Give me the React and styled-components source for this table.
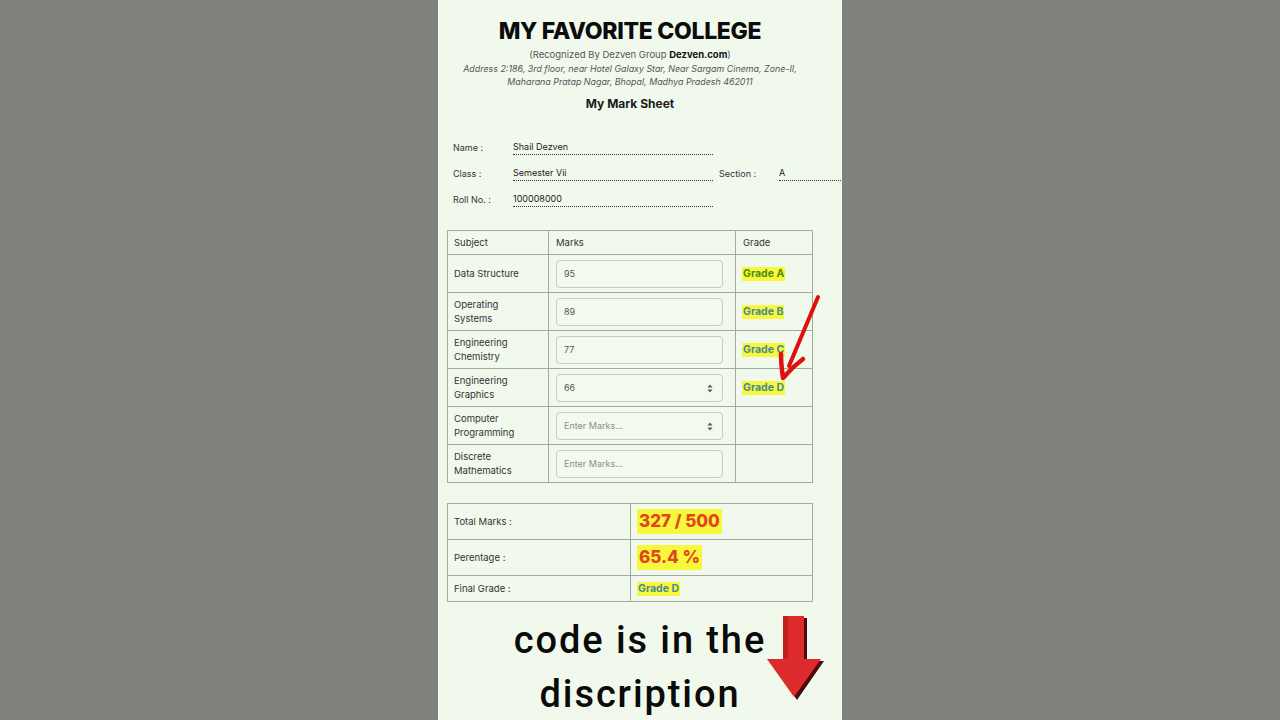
import React from "react"
import styled, { createGlobalStyle } from "styled-components"

// GLOBAL
const GlobalStyle = createGlobalStyle`
  html, body {
    margin: 0;
    padding: 0;
    background: #7f817d;
  }
  body {
    font-family: "Inter", "Noto Sans", sans-serif;
  }
`

// STYLED COMPONENTS
const Backdrop = styled.div`
  width: 1280px;
  height: 720px;
  display: flex;
  justify-content: center;
  background: linear-gradient(90deg, #7e807c 0%, #80827e 50%, #7f817d 100%);
  overflow: hidden;
`

const Sheet = styled.div`
  position: relative;
  width: 404px;
  height: 720px;
  background: #f1f9ec;
  overflow: hidden;
  display: flex;
  flex-direction: column;
`

const Header = styled.div`
  padding: 18px 20px 0 0;
  text-align: center;
  color: #111;
`

const Title = styled.div`
  font-size: 23px;
  line-height: 26px;
  font-weight: 800;
  letter-spacing: -0.3px;
  color: #0c0c0c;
`

const Recognized = styled.div`
  margin-top: 4px;
  font-size: 9.5px;
  line-height: 14px;
  color: #555;
  & > b {
    color: #111;
    font-weight: 700;
  }
`

const Address = styled.div`
  font-size: 8.9px;
  line-height: 13px;
  font-style: italic;
  color: #555;
`

const SheetTitle = styled.div`
  margin-top: 8px;
  font-size: 12px;
  line-height: 16px;
  font-weight: 700;
  color: #1a1a1a;
`

const Info = styled.div`
  margin-top: 28px;
  padding-left: 15px;
  display: flex;
  flex-direction: column;
  gap: 11px;
`

const InfoRow = styled.div`
  display: flex;
  align-items: flex-end;
  gap: 6px;
  font-size: 9px;
  line-height: 14px;
  color: #333;
`

const Label = styled.div`
  width: 54px;
  flex-shrink: 0;
`

const Value = styled.div`
  width: 200px;
  flex-shrink: 0;
  height: 14px;
  border-bottom: 1px dotted #333;
  color: #222;
`

const Table = styled.div`
  margin: ${({ top }) => top || "0"} 0 0 9px;
  width: 365px;
  display: grid;
  grid-template-columns: ${({ cols }) => cols};
  border-top: 1px solid #a3ab9f;
  border-left: 1px solid #a3ab9f;
`

const Cell = styled.div`
  height: ${({ h }) => h}px;
  box-sizing: border-box;
  border-right: 1px solid #a3ab9f;
  border-bottom: 1px solid #a3ab9f;
  padding: 0 ${({ pad }) => pad || "6px"};
  display: flex;
  align-items: center;
  font-size: 9.5px;
  line-height: 14px;
  color: #333;
`

const MarkInput = styled.div`
  position: relative;
  width: 167px;
  height: 28px;
  box-sizing: border-box;
  border: 1px solid #c4cbc1;
  border-radius: 4px;
  background: #f2f9ee;
  padding: 0 7px;
  display: flex;
  align-items: center;
  font-size: 9px;
  color: ${({ empty }) => (empty ? "#8a8f88" : "#555")};
`

const Spinner = styled.svg`
  position: absolute;
  right: 9px;
  top: 9px;
`

const Grade = styled.span`
  background: #f7f73b;
  color: ${({ color }) => color || "#4a8a96"};
  font-weight: 700;
  font-size: 10.5px;
  line-height: 14px;
  padding: 0 1px;
`

const Big = styled.span`
  background: #f7f73b;
  color: #e2441d;
  font-weight: 800;
  font-size: 17px;
  line-height: 25px;
  padding: 0 2px;
`

const Caption = styled.div`
  position: relative;
  margin-top: 11px;
  text-align: center;
  font-family: "Roboto", "Noto Sans", sans-serif;
  font-size: 38px;
  line-height: 54px;
  letter-spacing: 1.9px;
  font-weight: 500;
  color: #0a0a0a;
`

const DownArrow = styled.svg`
  position: absolute;
  left: 329px;
  top: 3px;
`

const HandArrow = styled.svg`
  position: absolute;
  left: 335px;
  top: 290px;
`

const subjects = [
  { name: ["Data Structure"], mark: "95", grade: "Grade A", color: "#4f8a0f" },
  { name: ["Operating", "Systems"], mark: "89", grade: "Grade B" },
  { name: ["Engineering", "Chemistry"], mark: "77", grade: "Grade C" },
  { name: ["Engineering", "Graphics"], mark: "66", grade: "Grade D", spin: true },
  { name: ["Computer", "Programming"], mark: "", spin: true },
  { name: ["Discrete", "Mathematics"], mark: "" },
]

function Spin() {
  return (
    <Spinner width="6" height="9" viewBox="0 0 6 9">
      <path d="M3 0.5 L5.5 3.5 H0.5 Z M3 8.5 L5.5 5.5 H0.5 Z" fill="#555" />
    </Spinner>
  )
}

export default function App() {
  return (
    <Backdrop>
      <GlobalStyle />
      <Sheet>
        <Header>
          <Title>MY FAVORITE COLLEGE</Title>
          <Recognized>
            (Recognized By Dezven Group <b>Dezven.com</b>)
          </Recognized>
          <Address>Address 2:186, 3rd floor, near Hotel Galaxy Star, Near Sargam Cinema, Zone-II,</Address>
          <Address>Maharana Pratap Nagar, Bhopal, Madhya Pradesh 462011</Address>
          <SheetTitle>My Mark Sheet</SheetTitle>
        </Header>

        <Info>
          <InfoRow>
            <Label>Name :</Label>
            <Value>Shail Dezven</Value>
          </InfoRow>
          <InfoRow>
            <Label>Class :</Label>
            <Value>Semester Vii</Value>
            <Label>Section :</Label>
            <Value>A</Value>
          </InfoRow>
          <InfoRow>
            <Label>Roll No. :</Label>
            <Value>100008000</Value>
          </InfoRow>
        </Info>

        <Table top="23px" cols="101px 187px 77px">
          <Cell h={24}>Subject</Cell>
          <Cell h={24} pad="7px">Marks</Cell>
          <Cell h={24} pad="7px">Grade</Cell>
          {subjects.map((s, i) => (
            <React.Fragment key={i}>
              <Cell h={38}>
                <div>
                  {s.name.map((n) => (
                    <div key={n}>{n}</div>
                  ))}
                </div>
              </Cell>
              <Cell h={38} pad="7px">
                <MarkInput empty={!s.mark}>
                  {s.mark || "Enter Marks..."}
                  {s.spin && <Spin />}
                </MarkInput>
              </Cell>
              <Cell h={38} pad="6px">
                {s.grade && <Grade color={s.color}>{s.grade}</Grade>}
              </Cell>
            </React.Fragment>
          ))}
        </Table>

        <Table top="20px" cols="183px 182px">
          <Cell h={36}>Total Marks :</Cell>
          <Cell h={36} pad="6px">
            <Big>327 / 500</Big>
          </Cell>
          <Cell h={36}>Perentage :</Cell>
          <Cell h={36} pad="6px">
            <Big>65.4 %</Big>
          </Cell>
          <Cell h={26}>Final Grade :</Cell>
          <Cell h={26} pad="6px">
            <Grade>Grade D</Grade>
          </Cell>
        </Table>

        <Caption>
          code is in the
          <br />
          discription
          <DownArrow width="58" height="86" viewBox="0 0 58 86">
            <path d="M19 2 H40 V45 H57 L30 84 L3 45 H19 Z" fill="#4a0c0c" />
            <path d="M16 0 H37 V43 H54 L27 81 L0 43 H16 Z" fill="#dd2b2b" />
            <path d="M16 0 H21 V43 H16 Z" fill="#c22020" />
          </DownArrow>
        </Caption>

        <HandArrow width="60" height="100" viewBox="0 0 60 100">
          <path
            d="M45 7 C 38 24, 28 48, 16 76"
            stroke="#e01010"
            strokeWidth="4"
            strokeLinecap="round"
            fill="none"
          />
          <path
            d="M8 64 C 8 74, 9 81, 10 88 C 15 82, 22 75, 30 69"
            stroke="#e01010"
            strokeWidth="4.5"
            strokeLinecap="round"
            strokeLinejoin="round"
            fill="none"
          />
        </HandArrow>
      </Sheet>
    </Backdrop>
  )
}
